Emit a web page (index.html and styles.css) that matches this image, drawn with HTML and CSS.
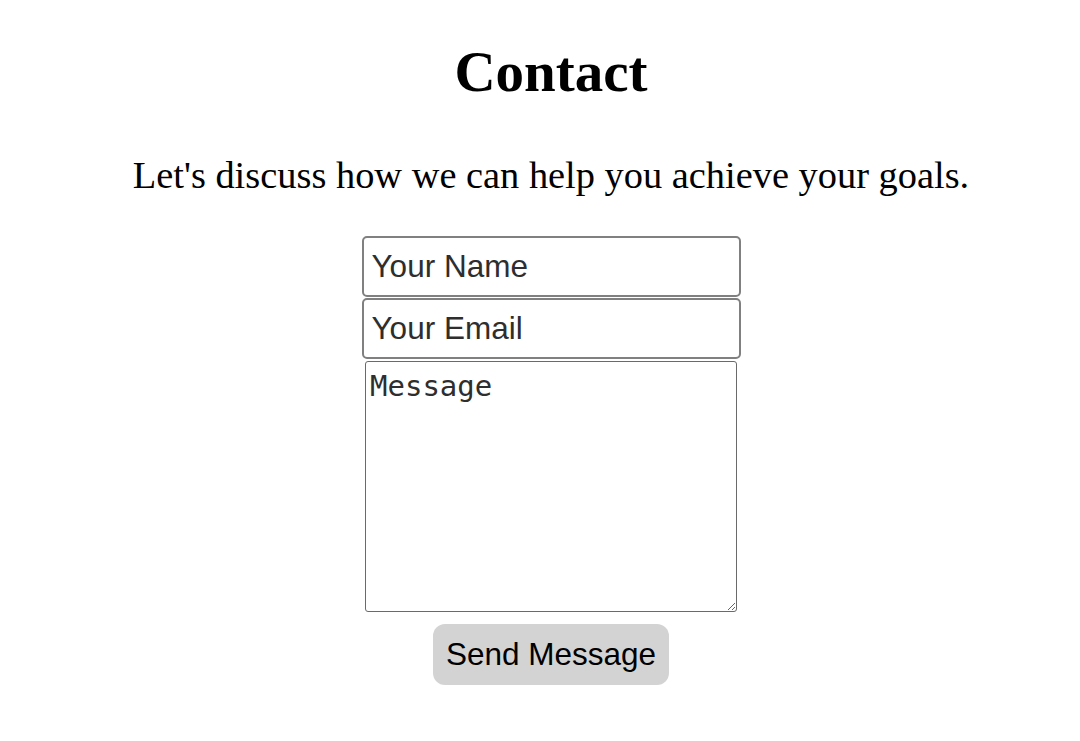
FILE: index.html
```html
<!DOCTYPE html>
<html lang="en">
<head>
  <meta charset="UTF-8" />
  <meta name="viewport" content="width=device-width, initial-scale=1" />
  <title>Contact</title>
  <link rel="stylesheet" href="styles.css">
</head>
<body>

  <!-- Contact section -->
  <section class="contact">
    <h1 class="contact-title">Contact</h1>
    <p class="contact-lead">Let's discuss how we can help you achieve your goals.</p>

    <form class="contact-form" onsubmit="return false;">
      <input type="text" class="field" placeholder="Your Name" />
      <input type="email" class="field" placeholder="Your Email" />
      <textarea class="field-message" placeholder="Message"></textarea>
      <button type="submit" class="send-button">Send Message</button>
    </form>
  </section>

</body>
</html>
```

FILE: styles.css
```css
body {
  margin: 0;
  padding: 0 0 0 22px;
  background: #ffffff;
  color: #000000;
  font-family: "Liberation Serif", "Times New Roman", serif;
}

.contact {
  text-align: center;
}

.contact-title {
  margin: 40px 0 0;
  font-size: 57px;
  font-weight: bold;
  line-height: 64px;
}

.contact-lead {
  margin: 49px 0 39px;
  font-size: 38.4px;
  line-height: 44px;
}

.contact-form {
  display: flex;
  flex-direction: column;
  align-items: center;
}

.field {
  box-sizing: border-box;
  width: 379px;
  height: 61px;
  margin: 0 0 1px;
  padding: 0 8px;
  border: 2px solid #808080;
  border-radius: 5px;
  font-family: "Liberation Sans", Arial, sans-serif;
  font-size: 31.5px;
  color: #222222;
}

.field::placeholder {
  color: #2e2e2e;
  opacity: 1;
}

.field + .field {
  margin-bottom: 2px;
}

.field-message {
  box-sizing: border-box;
  width: 372px;
  height: 251px;
  margin: 0;
  padding: 7px 4px;
  border: 1px solid #6a6a6a;
  border-radius: 3px;
  font-family: "DejaVu Sans Mono", "Liberation Mono", monospace;
  font-size: 29px;
  color: #222222;
}

.field-message::placeholder {
  color: #2e2e2e;
  opacity: 1;
}

.send-button {
  margin-top: 12px;
  padding: 12px 13px;
  border: none;
  border-radius: 12px;
  background: #d3d3d3;
  font-family: "Liberation Sans", Arial, sans-serif;
  font-size: 31.5px;
  color: #000000;
  cursor: pointer;
}
```
